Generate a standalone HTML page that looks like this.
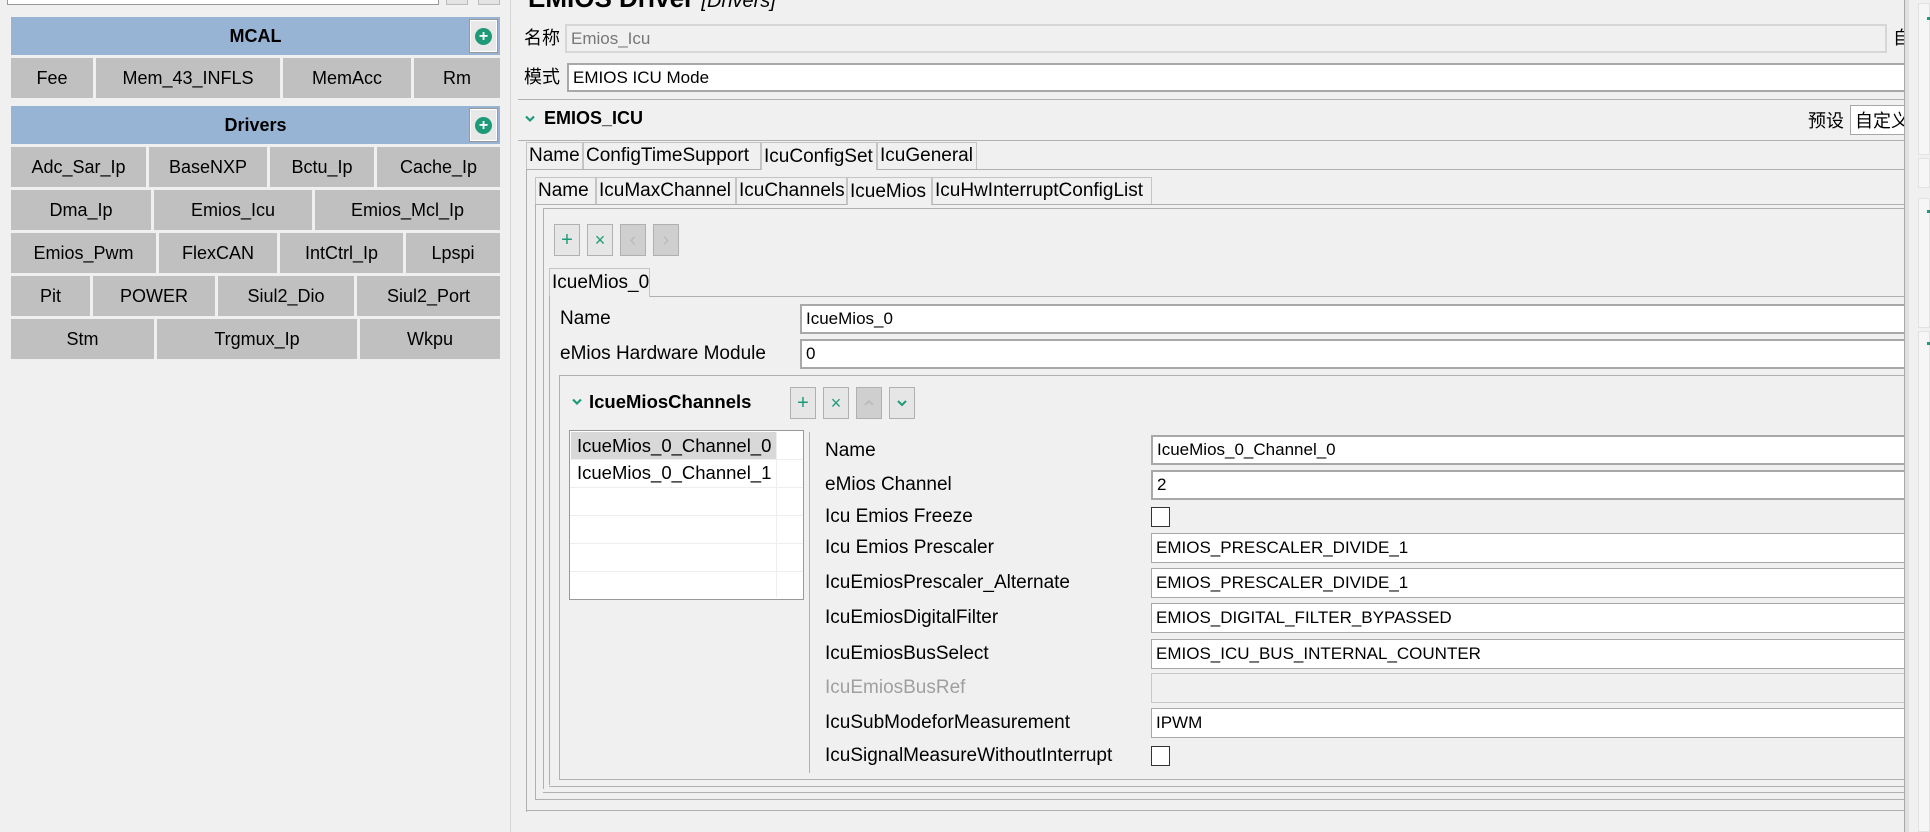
<!DOCTYPE html>
<html><head><meta charset="utf-8"><style>
*{box-sizing:border-box;margin:0;padding:0}
body{width:1930px;height:832px;overflow:hidden;background:#f0f0f0;font-family:"Liberation Sans","Noto Sans CJK SC",sans-serif;color:#000;position:relative}
.a{position:absolute}
.btn{position:absolute;background:#c0c0c0;font-size:18px;display:flex;align-items:center;justify-content:center;height:40px}
.hdr{position:absolute;left:11px;width:489px;height:38px;background:#98b4d4;font-weight:bold;font-size:18px;display:flex;align-items:center;justify-content:center}
.plus{position:absolute;right:3px;top:3px;width:27px;height:32px;border:1px solid #fff;outline:1px solid #999;background:#e8e8e8;display:flex;align-items:center;justify-content:center}
.plus i{display:block;width:17px;height:17px;border-radius:50%;background:#1f9a78;color:#fff;font-style:normal;font-weight:bold;font-size:16px;line-height:17px;text-align:center}
.lbl{position:absolute;font-size:19px;line-height:20px;white-space:nowrap}
.inp{position:absolute;background:#fff;border:2px solid #a8a8a8;border-right:none;font-size:17px;padding-left:4px;display:flex;align-items:center;height:30px;white-space:nowrap;overflow:hidden}
.dis{background:#f0f0f0;border-color:#d0d0d0}
.tab{position:absolute;height:27px;border:1px solid #c4c4c4;border-bottom:none;font-size:19px;display:flex;align-items:center;padding-left:2px;background:#f0f0f0;white-space:nowrap;overflow:hidden}
.tb{position:absolute;width:26px;height:32px;border:1px solid #b0b0b0;background:#e6e6e6;color:#1f9a78;font-size:20px;display:flex;align-items:center;justify-content:center}
.tb.d{background:#cfcfcf;color:#bbb}
.chk{position:absolute;width:19px;height:20px;border:1.5px solid #333;background:#fff}
.hl{position:absolute;height:1px;background:#b0b0b0}
.vl{position:absolute;width:1px;background:#b0b0b0}
</style></head><body>
<div class="a" style="left:7px;top:-2px;width:432px;height:7px;border:1px solid #999;background:#fff"></div>
<div class="a" style="left:446px;top:-2px;width:22px;height:7px;border:1px solid #bbb;background:#e4e4e4"></div>
<div class="a" style="left:478px;top:-2px;width:22px;height:7px;border:1px solid #bbb;background:#e4e4e4"></div>
<div class="vl" style="left:510px;top:0;height:832px;background:#d6d6d6"></div>
<div class="hdr" style="top:17px">MCAL<div class="plus"><i>+</i></div></div>
<div class="btn" style="top:58px;left:11px;width:82px">Fee</div>
<div class="btn" style="top:58px;left:96px;width:184px">Mem_43_INFLS</div>
<div class="btn" style="top:58px;left:283px;width:128px">MemAcc</div>
<div class="btn" style="top:58px;left:414px;width:86px">Rm</div>
<div class="hdr" style="top:106px">Drivers<div class="plus"><i>+</i></div></div>
<div class="btn" style="top:147px;left:11px;width:135px">Adc_Sar_Ip</div>
<div class="btn" style="top:147px;left:149px;width:118px">BaseNXP</div>
<div class="btn" style="top:147px;left:270px;width:104px">Bctu_Ip</div>
<div class="btn" style="top:147px;left:377px;width:123px">Cache_Ip</div>
<div class="btn" style="top:190px;left:11px;width:140px">Dma_Ip</div>
<div class="btn" style="top:190px;left:154px;width:158px">Emios_Icu</div>
<div class="btn" style="top:190px;left:315px;width:185px">Emios_Mcl_Ip</div>
<div class="btn" style="top:233px;left:11px;width:145px">Emios_Pwm</div>
<div class="btn" style="top:233px;left:159px;width:118px">FlexCAN</div>
<div class="btn" style="top:233px;left:280px;width:123px">IntCtrl_Ip</div>
<div class="btn" style="top:233px;left:406px;width:94px">Lpspi</div>
<div class="btn" style="top:276px;left:11px;width:79px">Pit</div>
<div class="btn" style="top:276px;left:93px;width:122px">POWER</div>
<div class="btn" style="top:276px;left:218px;width:136px">Siul2_Dio</div>
<div class="btn" style="top:276px;left:357px;width:143px">Siul2_Port</div>
<div class="btn" style="top:319px;left:11px;width:143px">Stm</div>
<div class="btn" style="top:319px;left:157px;width:200px">Trgmux_Ip</div>
<div class="btn" style="top:319px;left:360px;width:140px">Wkpu</div>

<div class="a" style="left:528px;top:-17px;font-size:26px;font-weight:bold;white-space:nowrap">EMIOS Driver <span style="font-weight:normal;font-style:italic;font-size:20px">[Drivers]</span></div>
<div class="lbl" style="left:524px;top:28px;font-size:18px">名称</div>
<div class="inp dis" style="left:565px;top:24px;width:1322px;height:29px;border:2px solid #d6d6d6;color:#777">Emios_Icu</div>
<div class="lbl" style="left:1893px;top:28px;font-size:18px">自</div>
<div class="lbl" style="left:524px;top:67px;font-size:18px">模式</div>
<div class="inp" style="left:567px;top:63px;width:1338px;height:29px">EMIOS ICU Mode</div>
<div class="hl" style="left:518px;top:99px;width:1387px"></div>
<svg class="a" style="left:525px;top:115px" width="10" height="8"><path d="M1 1.5 L5 5.5 L9 1.5" stroke="#1f9a78" stroke-width="2.2" fill="none"/></svg>
<div class="a" style="left:544px;top:108px;font-size:18px;font-weight:bold">EMIOS_ICU</div>
<div class="lbl" style="left:1808px;top:111px;font-size:18px">预设</div>
<div class="inp" style="left:1850px;top:105px;width:55px;height:30px;border-width:1px;font-size:18px">自定义</div>
<div class="hl" style="left:518px;top:140px;width:1387px"></div>
<div class="tab" style="left:526px;top:142px;width:57px">Name</div>
<div class="tab" style="left:583px;top:142px;width:178px">ConfigTimeSupport</div>
<div class="tab" style="left:761px;top:142px;width:116px;height:28px">IcuConfigSet</div>
<div class="tab" style="left:877px;top:142px;width:100px">IcuGeneral</div>
<div class="hl" style="left:526px;top:169px;width:235px"></div>
<div class="hl" style="left:877px;top:169px;width:1028px"></div>
<div class="vl" style="left:526px;top:169px;height:643px"></div>
<div class="tab" style="left:535px;top:177px;width:61px">Name</div>
<div class="tab" style="left:596px;top:177px;width:140px">IcuMaxChannel</div>
<div class="tab" style="left:736px;top:177px;width:111px">IcuChannels</div>
<div class="tab" style="left:847px;top:177px;width:85px;height:28px">IcueMios</div>
<div class="tab" style="left:932px;top:177px;width:220px">IcuHwInterruptConfigList</div>
<div class="hl" style="left:535px;top:204px;width:312px"></div>
<div class="hl" style="left:932px;top:204px;width:973px"></div>
<div class="vl" style="left:535px;top:204px;height:596px"></div>
<div class="hl" style="left:543px;top:208px;width:1362px"></div>
<div class="vl" style="left:543px;top:208px;height:581px"></div>
<div class="tb" style="left:554px;top:224px">+</div>
<div class="tb" style="left:587px;top:224px;font-size:18px">×</div>
<div class="tb d" style="left:620px;top:224px">‹</div>
<div class="tb d" style="left:653px;top:224px">›</div>
<div class="tab" style="left:549px;top:268px;width:101px;height:29px">IcueMios_0</div>
<div class="hl" style="left:650px;top:296px;width:1255px"></div>
<div class="vl" style="left:549px;top:296px;height:489px"></div>
<div class="lbl" style="left:560px;top:309px">Name</div>
<div class="inp" style="left:800px;top:304px;width:1105px">IcueMios_0</div>
<div class="lbl" style="left:560px;top:344px">eMios Hardware Module</div>
<div class="inp" style="left:800px;top:339px;width:1105px">0</div>
<div class="hl" style="left:559px;top:375px;width:1346px"></div>
<div class="vl" style="left:559px;top:375px;height:404px"></div>
<div class="hl" style="left:559px;top:779px;width:1346px"></div>
<div class="hl" style="left:549px;top:786px;width:1356px"></div>
<div class="hl" style="left:543px;top:792px;width:1362px"></div>
<div class="hl" style="left:535px;top:799px;width:1370px"></div>
<div class="hl" style="left:526px;top:810px;width:1379px"></div>
<svg class="a" style="left:572px;top:398px" width="10" height="8"><path d="M1 1.5 L5 5.5 L9 1.5" stroke="#1f9a78" stroke-width="2.2" fill="none"/></svg>
<div class="a" style="left:589px;top:391px;font-size:18.5px;font-weight:bold">IcueMiosChannels</div>
<div class="tb" style="left:790px;top:387px">+</div>
<div class="tb" style="left:823px;top:387px;font-size:18px">×</div>
<div class="tb d" style="left:856px;top:387px"><svg width="10" height="8"><path d="M1 6 L5 2 L9 6" stroke="#bbb" stroke-width="1.8" fill="none"/></svg></div>
<div class="tb" style="left:889px;top:387px"><svg width="10" height="8"><path d="M1 2 L5 6 L9 2" stroke="#1f9a78" stroke-width="2" fill="none"/></svg></div>
<div class="a" style="left:569px;top:430px;width:235px;height:170px;border:1px solid #999;background:#fff"></div>
<div class="a" style="left:571px;top:432px;width:205px;height:27px;background:#d8d8d8"></div>
<div class="vl" style="left:776px;top:432px;height:166px;background:#eee"></div>
<div class="hl" style="left:570px;top:459px;width:233px;background:#eee"></div>
<div class="hl" style="left:570px;top:487px;width:233px;background:#eee"></div>
<div class="hl" style="left:570px;top:515px;width:233px;background:#eee"></div>
<div class="hl" style="left:570px;top:543px;width:233px;background:#eee"></div>
<div class="hl" style="left:570px;top:571px;width:233px;background:#eee"></div>
<div class="lbl" style="left:577px;top:436px;font-size:18.5px">IcueMios_0_Channel_0</div>
<div class="lbl" style="left:577px;top:463px;font-size:18.5px">IcueMios_0_Channel_1</div>
<div class="vl" style="left:809px;top:432px;height:341px"></div>
<div class="lbl" style="left:825px;top:441px">Name</div>
<div class="inp" style="left:1151px;top:435px;width:754px">IcueMios_0_Channel_0</div>
<div class="lbl" style="left:825px;top:475px">eMios Channel</div>
<div class="inp" style="left:1151px;top:470px;width:754px">2</div>
<div class="lbl" style="left:825px;top:507px">Icu Emios Freeze</div>
<div class="chk" style="left:1151px;top:507px"></div>
<div class="lbl" style="left:825px;top:538px">Icu Emios Prescaler</div>
<div class="inp" style="left:1151px;top:533px;width:754px;border-width:1px">EMIOS_PRESCALER_DIVIDE_1</div>
<div class="lbl" style="left:825px;top:573px">IcuEmiosPrescaler_Alternate</div>
<div class="inp" style="left:1151px;top:568px;width:754px;border-width:1px">EMIOS_PRESCALER_DIVIDE_1</div>
<div class="lbl" style="left:825px;top:608px">IcuEmiosDigitalFilter</div>
<div class="inp" style="left:1151px;top:603px;width:754px;border-width:1px">EMIOS_DIGITAL_FILTER_BYPASSED</div>
<div class="lbl" style="left:825px;top:644px">IcuEmiosBusSelect</div>
<div class="inp" style="left:1151px;top:639px;width:754px;border-width:1px">EMIOS_ICU_BUS_INTERNAL_COUNTER</div>
<div class="lbl" style="left:825px;top:678px;color:#a0a0a0">IcuEmiosBusRef</div>
<div class="inp dis" style="left:1151px;top:673px;width:754px;border-width:1px;border-color:#c8c8c8"></div>
<div class="lbl" style="left:825px;top:713px">IcuSubModeforMeasurement</div>
<div class="inp" style="left:1151px;top:708px;width:754px;border-width:1px">IPWM</div>
<div class="lbl" style="left:825px;top:746px">IcuSignalMeasureWithoutInterrupt</div>
<div class="chk" style="left:1151px;top:746px"></div>
<div class="vl" style="left:1904px;top:0;height:832px;background:#a8a8a8"></div>
<div class="a" style="left:1905px;top:0;width:4px;height:832px;background:#e0e0e0"></div>
<div class="a" style="left:1918px;top:3px;width:12px;height:152px;background:#f6f6f6;border:1px solid #e2e2e2"></div>
<div class="a" style="left:1918px;top:158px;width:12px;height:30px;background:#f6f6f6;border:1px solid #e2e2e2"></div>
<div class="a" style="left:1918px;top:198px;width:12px;height:130px;background:#f6f6f6;border:1px solid #e2e2e2"></div>
<div class="a" style="left:1918px;top:331px;width:12px;height:501px;background:#f6f6f6;border:1px solid #e2e2e2"></div>
<div class="a" style="left:1927px;top:17px;width:4px;height:3px;background:#1f9a78"></div>
<div class="a" style="left:1927px;top:210px;width:4px;height:3px;background:#1f9a78"></div>
<div class="a" style="left:1927px;top:342px;width:4px;height:3px;background:#1f9a78"></div>
</body></html>
